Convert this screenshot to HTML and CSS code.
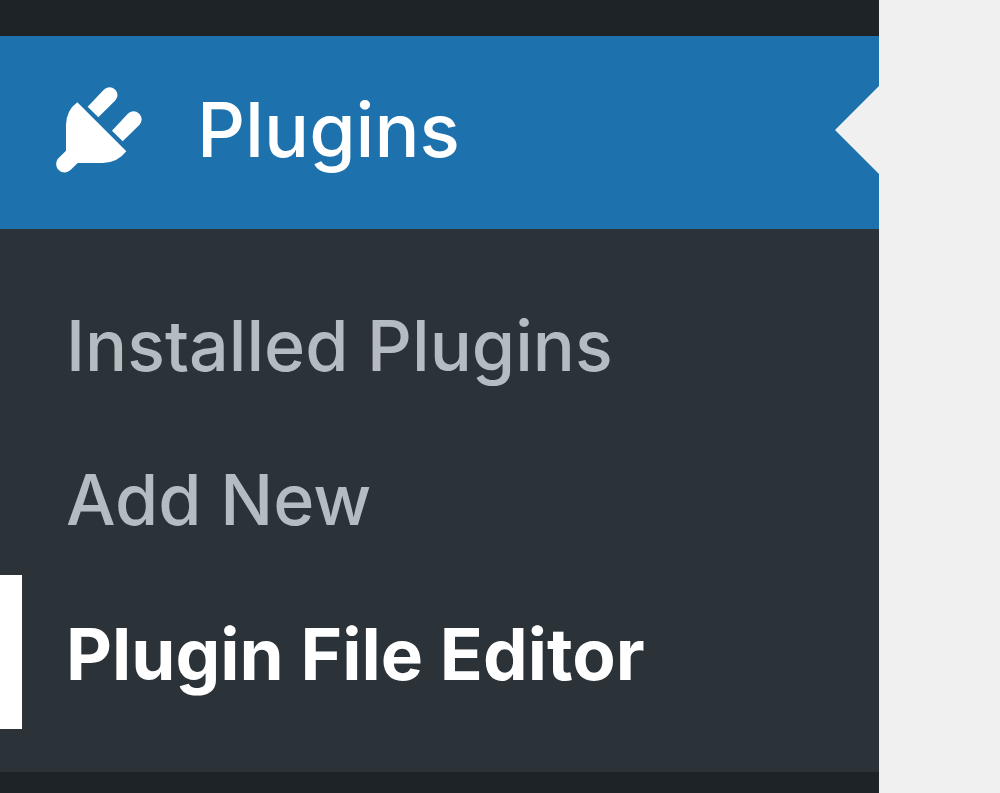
FILE: index.html
```html
<!DOCTYPE html>
<html lang="en">
<head>
    <meta charset="UTF-8">
    <meta name="viewport" content="width=device-width, initial-scale=1.0">
    <title>Plugins</title>

    <link rel="stylesheet" href="styles.css">
</head>
<body>
    <nav class="admin-menu">
        <a class="menu-top" href="#plugins">
            <svg class="menu-icon" viewBox="45 45 270 270" aria-hidden="true">
                <path d="M112 97 L259 244 Q232 279 188 279 L113 279 L94 298 C84 309 68 311 57 301 C46 291 46 274 56 264 L78 242 L78 164 Q80 120 112 97 Z"/>
                <path d="M143 110 L190 61 C200 50 214 48 224 58 C235 68 235 82 225 92 L175 142 Z"/>
                <path d="M216 182 L262 133 C272 122 286 120 296 130 C307 140 308 154 298 165 L248 214 Z"/>
            </svg>
            <span class="menu-name">Plugins</span>
        </a>
        <ul class="submenu">
            <li><a href="#installed">Installed Plugins</a></li>
            <li><a href="#add-new">Add New</a></li>
            <li class="current"><a href="#editor" aria-current="page">Plugin File Editor</a></li>
        </ul>
    </nav>
    <main class="content"></main>
</body>
</html>
```
FILE: styles.css
```css
body {
    display: flex;
    min-height: 100vh;
    margin: 0;
    background-color: #f0f0f0;
    font-family: Inter, "Liberation Sans", sans-serif;
}

a {
    text-decoration: none;
}

.admin-menu {
    flex: 1;
    box-sizing: border-box;
    padding-top: 36px;
    background-color: #1e2327;
}

.content {
    flex: 0 0 121px;
}

.menu-top {
    display: flex;
    align-items: center;
    gap: 52px;
    position: relative;
    padding: 0 55px 5px;
    background-color: #1d72ae;
    color: #fff;
    font-size: 75px;
    font-weight: 500;
    line-height: 188px;
}

/* arrow pointing back at the open menu */
.menu-top:after {
    content: '';
    position: absolute;
    top: 50px;
    right: 0;
    border: 44px solid transparent;
    border-left-width: 0;
    border-right-color: #f0f0f0;
}

.menu-icon {
    width: 90px;
    height: 90px;
    fill: #fff;
}

.submenu {
    margin: 0;
    padding: 38px 0 43px;
    background-color: #2c3338;
    list-style: none;
}

.submenu a {
    display: block;
    padding: 32px 40px 28px 66px;
    color: #b4bcc2;
    font-size: 70px;
    font-weight: 500;
    line-height: 94px;
}

.submenu .current a {
    padding-left: 44px;
    border-left: 22px solid #fff;
    color: #fff;
    font-size: 71px;
    font-weight: 700;
}
```
